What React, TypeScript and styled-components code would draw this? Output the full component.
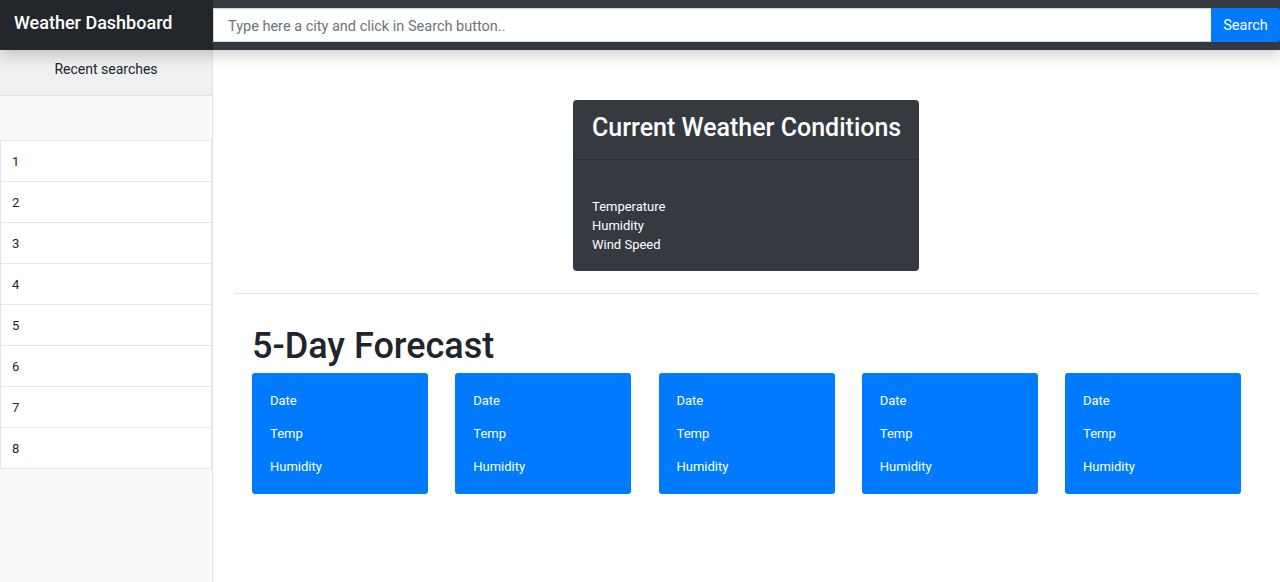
import React from "react"
import styled, { createGlobalStyle } from "styled-components"

const GlobalStyle = createGlobalStyle`
  * { box-sizing: border-box; }
  body {
    margin: 0;
    font-family: Roboto, "Liberation Sans", Arial, sans-serif;
    color: #212529;
    background: #fff;
  }
`

const recentSearches = ["1", "2", "3", "4", "5", "6", "7", "8"]
const forecastDays = [1, 2, 3, 4, 5]

const App = () => {
  return (
    <>
      <GlobalStyle />
      <Page>
        <Navbar>
          <Brand>Weather Dashboard</Brand>
          <SearchForm>
            <SearchInput placeholder="Type here a city and click in Search button.." />
            <SearchButton>Search</SearchButton>
          </SearchForm>
        </Navbar>
        <Body>
          <Sidebar>
            <SidebarHeader>Recent searches</SidebarHeader>
            <SidebarSpacer />
            <RecentList>
              {recentSearches.map((item) => (
                <RecentItem key={item}>{item}</RecentItem>
              ))}
            </RecentList>
          </Sidebar>
          <Main>
            <CurrentCard>
              <CurrentHeader>Current Weather Conditions</CurrentHeader>
              <CurrentBody>
                <InfoLine>Temperature</InfoLine>
                <InfoLine>Humidity</InfoLine>
                <InfoLine>Wind Speed</InfoLine>
              </CurrentBody>
            </CurrentCard>
            <Divider />
            <ForecastTitle>5-Day Forecast</ForecastTitle>
            <ForecastRow>
              {forecastDays.map((day) => (
                <ForecastCard key={day}>
                  <ForecastLine>Date</ForecastLine>
                  <ForecastLine>Temp</ForecastLine>
                  <ForecastLine>Humidity</ForecastLine>
                </ForecastCard>
              ))}
            </ForecastRow>
          </Main>
        </Body>
      </Page>
    </>
  )
}

const Page = styled.div`
  height: 582px;
  display: flex;
  flex-direction: column;
  overflow: hidden;
`

const Navbar = styled.nav`
  height: 50px;
  flex: 0 0 50px;
  display: flex;
  background: #343a40;
  box-shadow: 0 6px 14px rgba(0, 0, 0, 0.18);
  position: relative;
  z-index: 2;
`

const Brand = styled.div`
  width: 213px;
  flex: 0 0 213px;
  background: #23272b;
  color: #fff;
  font-size: 18px;
  font-weight: 500;
  padding: 0 14px 6px;
  display: flex;
  align-items: center;
  white-space: nowrap;
`

const SearchForm = styled.div`
  flex: 1;
  display: flex;
  padding-top: 8px;
  height: 42px;
`

const SearchInput = styled.input`
  flex: 1;
  height: 34px;
  border: 1px solid #ced4da;
  border-right: none;
  padding: 2px 14px 0;
  font-family: inherit;
  font-size: 14.5px;
  color: #495057;
  outline: none;
  &::placeholder {
    color: #6c757d;
  }
`

const SearchButton = styled.button`
  width: 69px;
  height: 34px;
  border: 1px solid #007bff;
  border-radius: 0 3px 3px 0;
  background: #007bff;
  color: #fff;
  font-family: inherit;
  font-size: 14.5px;
  padding: 0;
`

const Body = styled.div`
  flex: 1;
  display: flex;
  min-height: 0;
`

const Sidebar = styled.aside`
  width: 213px;
  flex: 0 0 213px;
  background: #f8f9fa;
  border-right: 1px solid #e3e5e8;
  display: flex;
  flex-direction: column;
`

const SidebarHeader = styled.div`
  height: 46px;
  display: flex;
  align-items: center;
  justify-content: center;
  padding-bottom: 7px;
  background: #eff0f2;
  border-bottom: 1px solid #dee2e6;
  font-size: 14px;
  color: #212529;
`

const SidebarSpacer = styled.div`
  height: 44px;
`

const RecentList = styled.ul`
  list-style: none;
  margin: 0;
  padding: 0;
`

const RecentItem = styled.li`
  height: 42px;
  display: flex;
  align-items: center;
  padding: 0 11px;
  background: #fff;
  border: 1px solid #e3e5e8;
  margin-top: -1px;
  font-size: 13px;
  &:first-child {
    margin-top: 0;
  }
`

const Main = styled.main`
  flex: 1;
  display: flex;
  flex-direction: column;
  padding: 50px 22px 0 21px;
`

const CurrentCard = styled.section`
  align-self: center;
  width: 346px;
  height: 171px;
  background: #343a40;
  border-radius: 4px;
  color: #fff;
  display: flex;
  flex-direction: column;
`

const CurrentHeader = styled.h2`
  margin: 0;
  height: 60px;
  display: flex;
  align-items: center;
  padding: 0 19px 5px;
  font-size: 25px;
  font-weight: 500;
  white-space: nowrap;
  border-bottom: 1px solid rgba(0, 0, 0, 0.2);
`

const CurrentBody = styled.div`
  padding: 37px 19px 0;
`

const InfoLine = styled.div`
  font-size: 13px;
  line-height: 19px;
`

const Divider = styled.hr`
  margin: 22px 0 0;
  border: none;
  border-top: 1px solid #e1e3e6;
  width: 100%;
`

const ForecastTitle = styled.h1`
  margin: 30px 0 0 18px;
  font-size: 36px;
  font-weight: 500;
  line-height: 44px;
`

const ForecastRow = styled.div`
  display: flex;
  gap: 27.25px;
  padding-left: 18px;
  margin-top: 5px;
`

const ForecastCard = styled.div`
  width: 176px;
  height: 121px;
  background: #007bff;
  border-radius: 3px;
  color: #fff;
  padding: 18px 18px 0;
  display: flex;
  flex-direction: column;
  gap: 14px;
`

const ForecastLine = styled.div`
  font-size: 13px;
  line-height: 19px;
`

export default App
